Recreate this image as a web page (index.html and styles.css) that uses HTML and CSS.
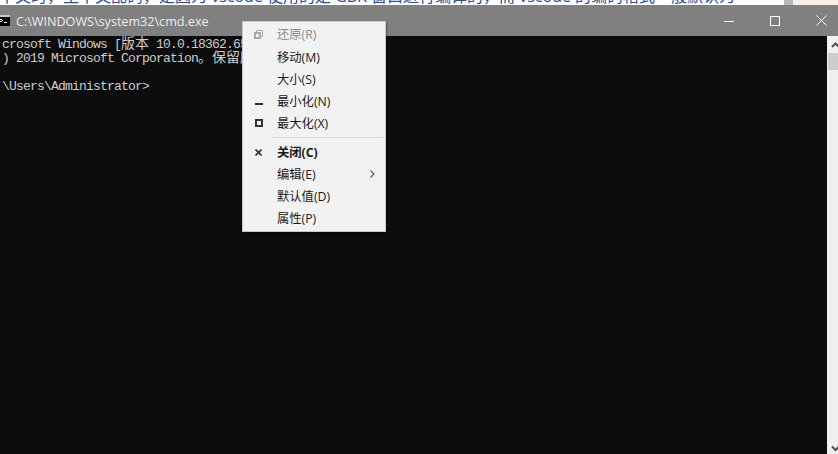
FILE: index.html
```html
<!DOCTYPE html>
<html lang="zh-CN">
<head>
<meta charset="utf-8">
<title>cmd</title>
<link rel="stylesheet" href="styles.css">
</head>
<body>
<div class="page-strip">
  <p class="article">中文时，主中文乱码，是因为 vscode 使用的是 GBK 窗口进行编译的，而 vscode 的编码格式一般默认为</p>
  <div class="strip-gutter"></div>
  <div class="strip-side"></div>
</div>
<div class="window">
  <header class="titlebar">
    <svg class="app-icon" width="10" height="11" viewBox="0 0 10 11">
      <rect x="0" y="0" width="10" height="11" fill="#000"/>
      <rect x="0" y="0" width="10" height="2" fill="#c8c8c8"/>
      <rect x="0" y="4" width="2" height="1" fill="#fff"/><rect x="2" y="5" width="1" height="1" fill="#fff"/>
      <rect x="0" y="6" width="2" height="1" fill="#fff"/><rect x="4" y="7" width="3" height="1" fill="#fff"/>
    </svg>
    <span class="title">C:\WINDOWS\system32\cmd.exe</span>
    <div class="controls">
      <div class="ctl"><svg width="10" height="10" viewBox="0 0 10 10"><path d="M0 5.500H10" stroke="#fff" fill="none"/></svg></div>
      <div class="ctl"><svg width="10" height="10" viewBox="0 0 10 10"><rect x=".5" y=".5" width="9" height="9" stroke="#fff" fill="none"/></svg></div>
      <div class="ctl"><svg width="11" height="11" viewBox="0 0 11 11"><path d="M.5 .5L10.500 10.500M10.500 .5L.5 10.500" stroke="#fff" fill="none"/></svg></div>
    </div>
  </header>
  <div class="body">
    <div class="console">
      <div class="line">crosoft Windows [<span class="cjk">版本</span> 10.0.18362.657]</div>
      <div class="line">) 2019 Microsoft Corporation<span class="cjk">。保留所有权利。</span></div>
      <div class="line"></div>
      <div class="line">\Users\Administrator&gt;</div>
    </div>
    <div class="scrollbar">
      <svg width="11" height="17" viewBox="0 0 11 17"><path d="M5 11L8.500 7.500L12 11" stroke="#505050" stroke-width="2" fill="none"/></svg>
      <div class="thumb"></div>
      <div class="track"></div>
      <svg width="11" height="17" viewBox="0 0 11 17"><path d="M5 9.500L8.500 13L12 9.500" stroke="#505050" stroke-width="2" fill="none"/></svg>
    </div>
  </div>
</div>
<nav class="menu">
  <div class="item off"><span class="ico"><svg width="9" height="9" viewBox="0 0 9 9"><path d="M2.500 2.500V.5H8.500V6.500H6.500" stroke="#a8a8a8" fill="none"/><rect x="1" y="3" width="5" height="5" stroke="#a8a8a8" stroke-width="2" fill="none"/></svg></span>还原(R)</div>
  <div class="item"><span class="ico"></span>移动(M)</div>
  <div class="item"><span class="ico"></span>大小(S)</div>
  <div class="item"><span class="ico"><svg width="8" height="9" viewBox="0 0 8 9"><path d="M0 7H8" stroke="#333" stroke-width="2" fill="none"/></svg></span>最小化(N)</div>
  <div class="item"><span class="ico"><svg width="8" height="8" viewBox="0 0 8 8"><rect x="1" y="1" width="6" height="6" stroke="#333" stroke-width="2" fill="none"/></svg></span>最大化(X)</div>
  <div class="sep"></div>
  <div class="item strong"><span class="ico"><svg width="7" height="7" viewBox="0 0 7 7"><path d="M.5 .5L6.500 6.500M6.500 .5L.5 6.500" stroke="#333" stroke-width="1.700" fill="none"/></svg></span>关闭(C)</div>
  <div class="item"><span class="ico"></span>编辑(E)<svg class="arrow" width="5" height="8" viewBox="0 0 5 8"><path d="M.5 .5L4 4L.5 7.500" stroke="#555" stroke-width="1.100" fill="none"/></svg></div>
  <div class="item"><span class="ico"></span>默认值(D)</div>
  <div class="item"><span class="ico"></span>属性(P)</div>
</nav>
</body>
</html>
```
FILE: styles.css
```css
html, body {
  margin: 0;
  height: 100%;
  overflow: hidden;
  background: #0c0c0c;
}
body {
  display: flex;
  flex-direction: column;
  font-family: "Open Sans", "Noto Sans CJK SC", sans-serif;
}
.page-strip {
  height: 5px;
  flex: none;
  display: flex;
  background: #fff;
  overflow: hidden;
}
.article {
  width: 785px;
  flex: none;
  margin: -14px 0 0 -1px;
  font: 16px/20px "Open Sans", "Noto Sans CJK SC", sans-serif;
  color: #2a4f9a;
  white-space: nowrap;
  overflow: hidden;
}
.strip-gutter { width: 9px; flex: none; background: #b8b8b8; }
.strip-side { flex: 1; background: #f9eee6; }
.window {
  flex: 1;
  display: flex;
  flex-direction: column;
  min-height: 0;
}
.titlebar {
  height: 31px;
  flex: none;
  display: flex;
  align-items: center;
  background: #808080;
  color: #ececec;
  font-size: 12.6px;
}
.app-icon { flex: none; margin-right: 6px; }
.title { white-space: nowrap; padding-top: 1px; }
.controls { margin-left: auto; display: flex; align-items: center; margin-right: -6px; }
.ctl {
  width: 46px;
  height: 31px;
  display: flex;
  align-items: center;
  justify-content: center;
}
.body { flex: 1; display: flex; min-height: 0; }
.console {
  flex: 1;
  min-width: 0;
  padding: 2px 0 0 2px;
  color: #cccccc;
  font: 13px "Liberation Mono", "Noto Sans CJK SC", monospace;
  letter-spacing: -0.8px;
  overflow: hidden;
}
.line {
  height: 14px;
  line-height: 14px;
  white-space: pre;
}
.cjk {
  font: 14px/0 "Noto Sans CJK SC", sans-serif;
  letter-spacing: 0;
}
.scrollbar {
  width: 11px;
  flex: none;
  display: flex;
  flex-direction: column;
  background: #f0f0f0;
}
.scrollbar svg { flex: none; display: block; }
.thumb { height: 17px; flex: none; margin-left: 1px; background: #cdcdcd; }
.track { flex: 1; }
.menu {
  position: absolute;
  left: 242px;
  top: 21px;
  width: 142px;
  height: 208px;
  padding-top: 1px;
  background: #f2f2f2;
  border: 1px solid #c8c8c8;
  box-shadow: 1px 1px 2px rgba(0, 0, 0, .35);
  font-size: 12.3px;
  color: #1a1a1a;
  display: flex;
  flex-direction: column;
}
.item {
  height: 22px;
  flex: none;
  display: flex;
  align-items: center;
  white-space: nowrap;
  position: relative;
}
.ico {
  width: 34px;
  flex: none;
  display: flex;
  justify-content: center;
  padding-right: 3px;
  box-sizing: border-box;
}
.off { color: #8c8c8c; margin-bottom: 1px; }
.strong { font-weight: 700; }
.sep {
  height: 1px;
  margin: 3px 2px 3px 30px;
  background: #d8d8d8;
  flex: none;
}
.arrow { position: absolute; right: 10px; top: 7px; }
```
